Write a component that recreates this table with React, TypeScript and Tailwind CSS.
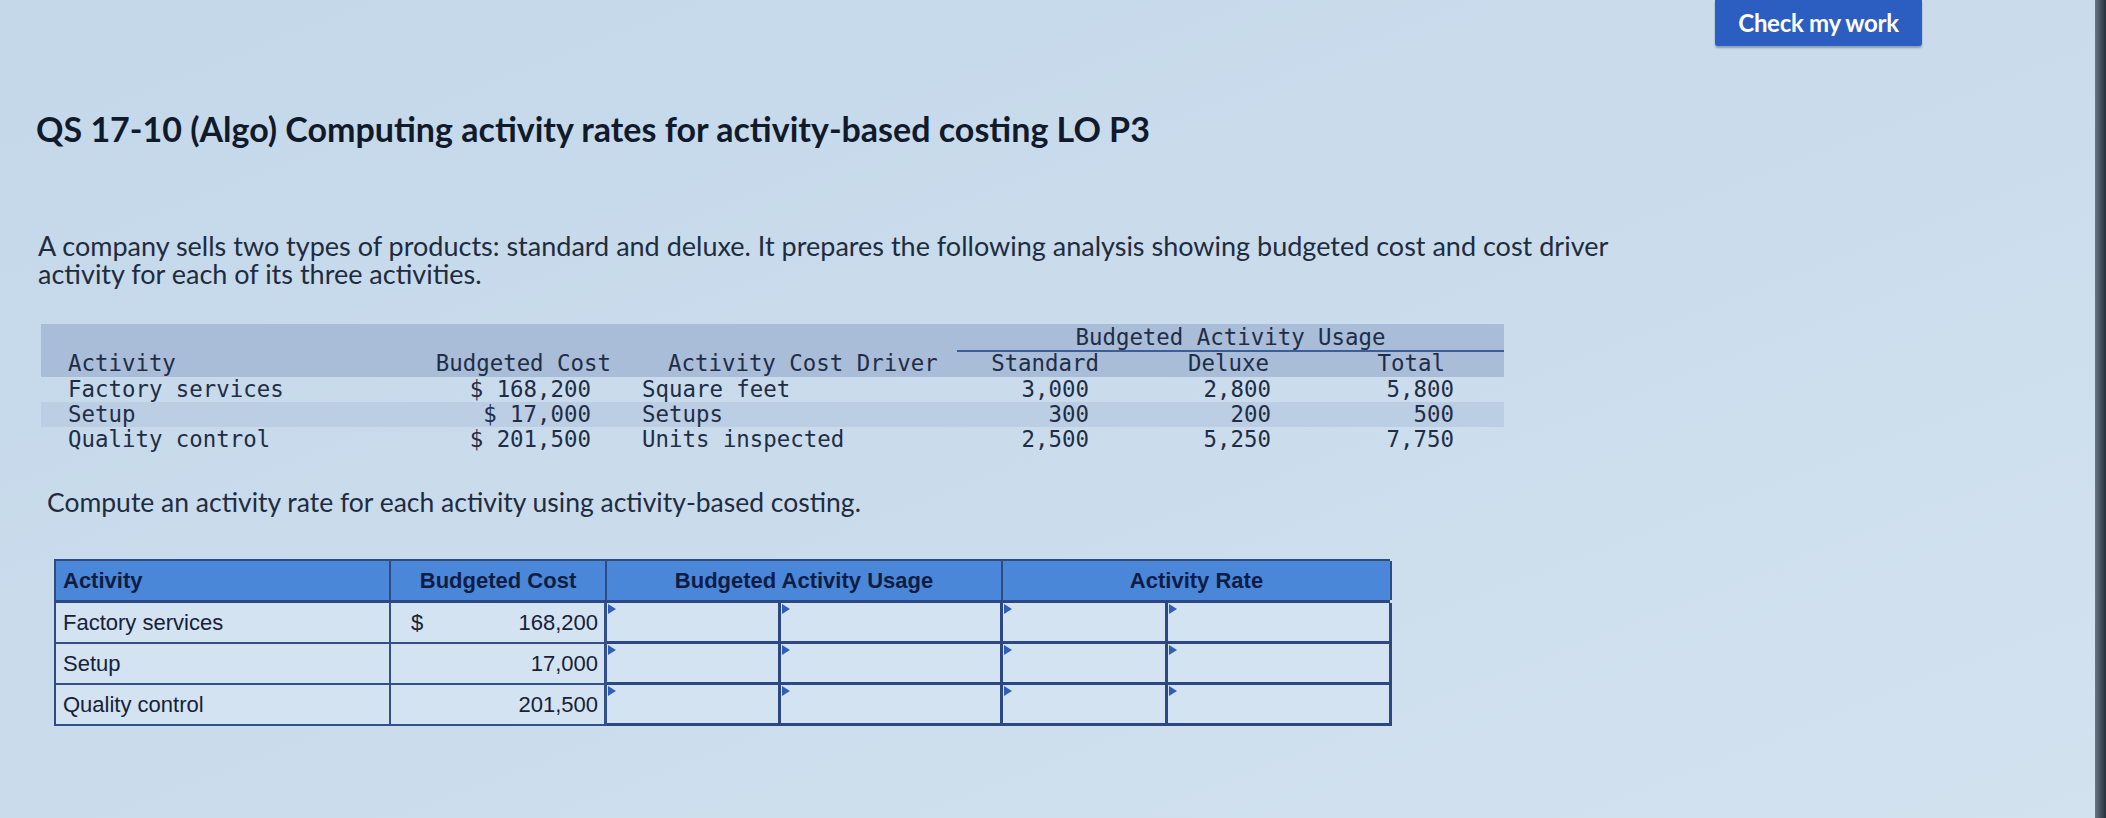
import React from "react";

const mono = "font-['DejaVu_Sans_Mono','Liberation_Mono',monospace]";
const arial = "font-['Liberation_Sans',Arial,sans-serif]";

const drivers = [
  { activity: "Factory services", cost: "$ 168,200", driver: "Square feet", std: "3,000", dlx: "2,800", total: "5,800" },
  { activity: "Setup", cost: "$ 17,000", driver: "Setups", std: "300", dlx: "200", total: "500" },
  { activity: "Quality control", cost: "$ 201,500", driver: "Units inspected", std: "2,500", dlx: "5,250", total: "7,750" },
];

const answers = [
  { activity: "Factory services", dollar: true, cost: "168,200" },
  { activity: "Setup", dollar: false, cost: "17,000" },
  { activity: "Quality control", dollar: false, cost: "201,500" },
];

function InputCell() {
  return (
    <div className="relative h-[41px] bg-[#d3e3f1] border-r-[3px] border-b-[3px] border-[#2c4782]">
      <span className="absolute left-[1px] top-[1px] w-0 h-0 border-y-[5px] border-y-transparent border-l-[8px] border-l-[#2f5fb8]" />
    </div>
  );
}

function SourceTable() {
  const grid = "grid grid-cols-[389px_185px_342px_143px_180px_224px]";
  return (
    <div className={`ml-[41px] w-[1463px] ${mono} text-[22.4px] text-[#1f2d46]`}>
      <div className="bg-[#a9bcd8]">
        <div className={`${grid} h-[26px] leading-[26px]`}>
          <div className="col-span-3" />
          <div className="col-span-3 text-center border-b-2 border-[#3c5e98]">Budgeted Activity Usage</div>
        </div>
        <div className={`${grid} h-[27px] leading-[27px]`}>
          <div className="pl-[27px]">Activity</div>
          <div className="text-right pr-[4px]">Budgeted Cost</div>
          <div className="pl-[53px]">Activity Cost Driver</div>
          <div className="text-right pr-[1px]">Standard</div>
          <div className="text-right pr-[11px]">Deluxe</div>
          <div className="text-right pr-[59px]">Total</div>
        </div>
      </div>
      {drivers.map((r, i) => (
        <div
          key={r.activity}
          className={`${grid} h-[25px] leading-[25px] whitespace-pre ${i === 1 ? "bg-[#bccee3]" : ""}`}
        >
          <div className="pl-[27px]">{r.activity}</div>
          <div className="text-right pr-[24px]">{r.cost}</div>
          <div className="pl-[27px]">{r.driver}</div>
          <div className="text-right pr-[11px]">{r.std}</div>
          <div className="text-right pr-[9px]">{r.dlx}</div>
          <div className="text-right pr-[50px]">{r.total}</div>
        </div>
      ))}
    </div>
  );
}

function AnswerTable() {
  const grid = "grid grid-cols-[335px_216px_174px_222px_165px_224px]";
  return (
    <div className={`ml-[54px] w-[1336px] border-l-2 border-t-2 border-[#2f4b80] ${arial} text-[22px] text-[#16213a]`}>
      <div className={`${grid} h-[42px] bg-[#4a87d9] font-bold text-[#0f1d45] border-b-[3px] border-[#2c4782]`}>
        <div className="flex items-center pl-[7px] border-r-2 border-[#2f4b80]">Activity</div>
        <div className="flex items-center justify-center border-r-2 border-[#2f4b80]">Budgeted Cost</div>
        <div className="col-span-2 flex items-center justify-center border-r-2 border-[#2f4b80]">Budgeted Activity Usage</div>
        <div className="col-span-2 flex items-center justify-center border-r-2 border-[#2f4b80]">Activity Rate</div>
      </div>
      {answers.map((r) => (
        <div key={r.activity} className={grid}>
          <div className="h-[41px] flex items-center pl-[7px] bg-[#d3e3f1] border-r-2 border-b-2 border-[#34508a]">
            {r.activity}
          </div>
          <div className="h-[41px] flex items-center justify-between pl-[20px] pr-[6px] bg-[#d3e3f1] border-r-[3px] border-b-2 border-[#34508a]">
            <span>{r.dollar ? "$" : ""}</span>
            <span>{r.cost}</span>
          </div>
          <InputCell />
          <InputCell />
          <InputCell />
          <InputCell />
        </div>
      ))}
    </div>
  );
}

export default function App() {
  return (
    <div className="w-[2106px] h-[818px] flex bg-linear-to-br from-[#c4d8ea] via-[#cadcec] to-[#d3e2ef] text-[#1d2a3e] font-['Lato','Noto_Sans',sans-serif]">
      <main className="flex-1 flex flex-col">
        <div className="flex justify-end pr-[173px]">
          <button className="w-[207px] h-[46px] rounded-b-[3px] bg-[#2b5ec0] text-white font-bold text-[24px] tracking-[-0.3px] shadow-[0_2px_2px_rgba(20,40,80,0.35)]">
            Check my work
          </button>
        </div>

        <h1 className="mt-[63px] pl-[36px] text-[34px] leading-[40px] font-bold text-[#111a2b]">
          QS 17-10 (Algo) Computing activity rates for activity-based costing LO P3
        </h1>

        <p className="mt-[83px] pl-[38px] text-[27px] leading-[28px] text-[#1f2c40]">
          A company sells two types of products: standard and deluxe. It prepares the following analysis showing budgeted cost and cost driver
          <br />
          activity for each of its three activities.
        </p>

        <div className="mt-[36px]">
          <SourceTable />
        </div>

        <p className="mt-[35px] pl-[47px] text-[26.5px] leading-[30px] text-[#1f2c40]">
          Compute an activity rate for each activity using activity-based costing.
        </p>

        <div className="mt-[42px]">
          <AnswerTable />
        </div>
      </main>
      <div className="w-[11px] bg-linear-to-r from-[#6b7684] to-[#28313c]" />
    </div>
  );
}
